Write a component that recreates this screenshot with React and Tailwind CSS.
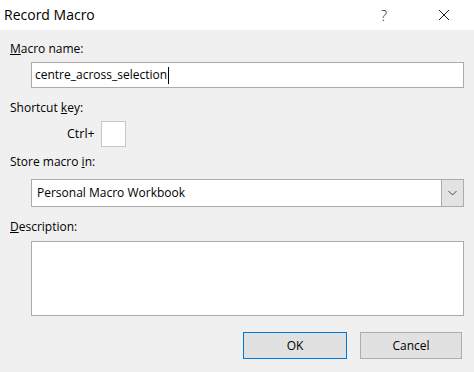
import React from 'react';

const font = { fontFamily: '"Open Sans", "Noto Sans", sans-serif' };

const Label = ({ children, className = '' }) => (
  <div className={`h-4 leading-4 text-[12px] text-black ${className}`}>{children}</div>
);

const App = () => (
  <div className="w-[474px] h-[372px] bg-[#f0f0f0] flex flex-col" style={font}>
    {/* title bar */}
    <div className="h-[30px] bg-white flex items-center">
      <div className="pl-[4px] text-[14px] leading-[30px] text-black flex-1">Record Macro</div>
      <div className="w-[30px] text-center text-[15px] font-light text-[#222] mr-[22px]">?</div>
      <div className="w-[46px] flex justify-center mr-[7px]">
        <svg width="12" height="12" viewBox="0 0 12 12">
          <path d="M1 1L11 11M11 1L1 11" stroke="#222" strokeWidth="1" fill="none" />
        </svg>
      </div>
    </div>

    {/* body */}
    <div className="flex flex-col pl-[10px] pr-[10px] pt-[11px]">
      <Label><span className="underline">M</span>acro name:</Label>
      <div className="mt-[5px] ml-[21px] h-[26px] bg-white border border-[#ababab] flex items-center pl-[3px] text-[12px] text-black">
        centre_across_selection
        <span className="inline-block w-px h-[17px] bg-black ml-px"></span>
      </div>

      <Label className="mt-[12px]">Shortcut <span className="underline">k</span>ey:</Label>
      <div className="mt-[5px] flex items-center">
        <span className="ml-[57px] text-[12.5px] text-black">Ctrl+</span>
        <div className="ml-[6px] w-[25px] h-[26px] bg-white border border-[#c6c6c6]"></div>
      </div>

      <Label className="mt-[7px]">Store macro <span className="underline">i</span>n:</Label>
      <div className="mt-[9px] ml-[21px] h-[28px] bg-white border border-[#ababab] flex items-stretch">
        <div className="flex-1 flex items-center pl-[5px] text-[12px] text-black">Personal Macro Workbook</div>
        <div className="w-[22px] bg-[#e3e3e3] border-l border-[#ababab] flex items-center justify-center">
          <svg width="9" height="6" viewBox="0 0 9 6">
            <path d="M0.5 1L4.5 5L8.5 1" stroke="#444" strokeWidth="1" fill="none" />
          </svg>
        </div>
      </div>

      <Label className="mt-[12px]"><span className="underline">D</span>escription:</Label>
      <div className="mt-[6px] ml-[21px] h-[75px] bg-white border border-[#ababab]"></div>

      <div className="mt-[16px] flex justify-end gap-[13px] pr-[2px]">
        <button className="w-[104px] h-[27px] bg-[#e1e1e1] border border-[#0078d7] text-[12px] text-black">OK</button>
        <button className="w-[102px] h-[27px] bg-[#e1e1e1] border border-[#adadad] text-[12px] text-black">Cancel</button>
      </div>
    </div>
  </div>
);

export default App;
